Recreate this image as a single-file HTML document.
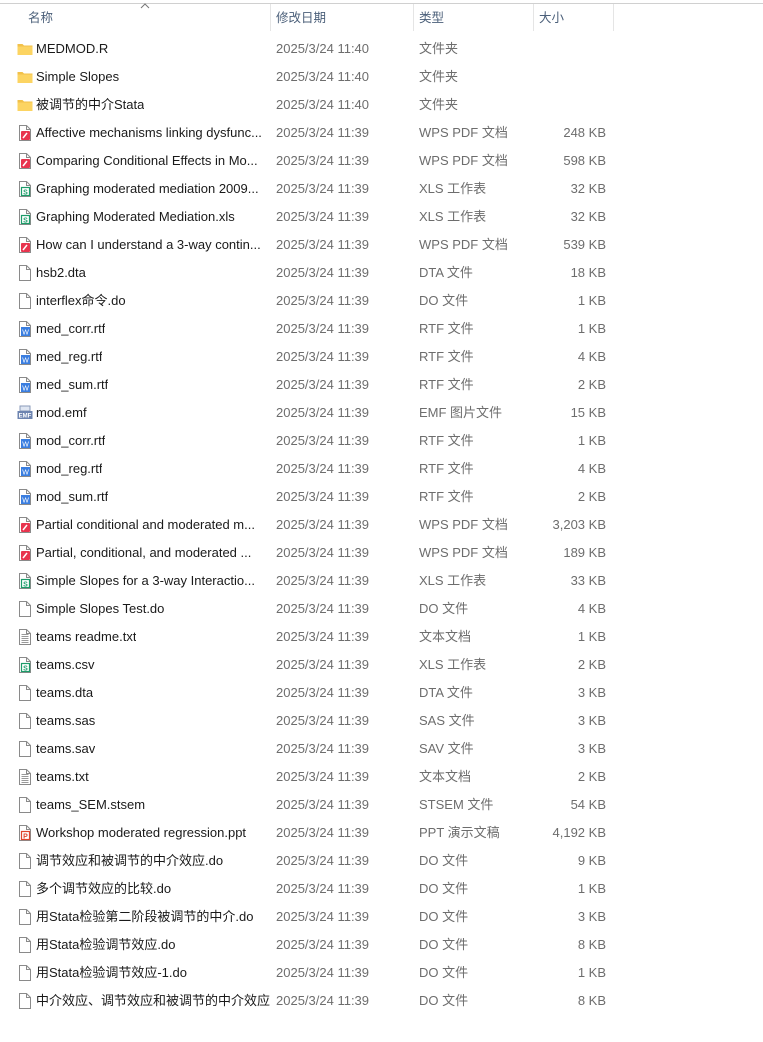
<!DOCTYPE html>
<html><head><meta charset="utf-8"><style>
body{margin:0;width:763px;height:1042px;background:#fff;font-family:"Liberation Sans","Noto Sans CJK SC",sans-serif;font-size:13px;color:#1a1a1a;position:relative;overflow:hidden}
.top{position:absolute;left:0;top:3px;width:763px;height:1px;background:#d0d0d0}
.sep{position:absolute;top:4px;height:27px;width:1px;background:#e5e5e5}
.h{position:absolute;top:10px;color:#4c607a;font-size:12.5px;line-height:16px}
.r{position:absolute;left:0;width:763px;height:20px;line-height:16px}
.r svg{position:absolute;left:17px;top:2px}
.r span{display:block;height:16px;line-height:16px}
.n{position:absolute;left:36px;top:2px;white-space:nowrap;max-width:234px;overflow:hidden;text-overflow:ellipsis}
.d{position:absolute;left:276px;top:2px;color:#6d6d6d}
.t{position:absolute;left:419px;top:2px;color:#6d6d6d}
.s{position:absolute;right:157px;top:2px;color:#6d6d6d}
</style></head><body>
<div class="top"></div>
<svg style="position:absolute;left:140px;top:3px" width="10" height="6"><path d="M1 5 L5 1 L9 5" stroke="#777" fill="none"/></svg>
<div class="sep" style="left:270px"></div><div class="sep" style="left:413px"></div><div class="sep" style="left:533px"></div><div class="sep" style="left:613px"></div>
<div class="h" style="left:28px">名称</div><div class="h" style="left:276px">修改日期</div><div class="h" style="left:419px">类型</div><div class="h" style="left:539px">大小</div>
<svg width="0" height="0" style="position:absolute"><defs>
<symbol id="folder" viewBox="0 0 16 16"><path d="M0.5 3 h5 l1.5 1.5 h8.5 v9.5 h-15z" fill="#f2c14a"/><rect x="0.5" y="5.5" width="15" height="8.5" fill="#fcd462"/></symbol>
<symbol id="file" viewBox="0 0 16 16"><path d="M2.5 0.5 h7 l4 4 v11 h-11z" fill="#fff" stroke="#8a8a8a"/><path d="M9.5 0.5 v4 h4" fill="none" stroke="#8a8a8a"/></symbol>
<symbol id="pdf" viewBox="0 0 16 16"><use href="#file"/><rect x="4" y="6" width="9" height="9" rx="1" fill="#e8344e"/><path d="M6 13 l4 -5" stroke="#fff" stroke-width="1.5"/></symbol>
<symbol id="xls" viewBox="0 0 16 16"><use href="#file"/><rect x="4.5" y="6.5" width="8" height="8" fill="#fff" stroke="#1c9c6a" stroke-width="1.2"/><text x="8.5" y="13.3" font-size="7" font-family="Liberation Sans" fill="#1c9c6a" text-anchor="middle" font-weight="bold">S</text></symbol>
<symbol id="rtf" viewBox="0 0 16 16"><use href="#file"/><rect x="4" y="6" width="9" height="9" fill="#3a7ee0"/><text x="8.5" y="13.5" font-size="7" font-family="Liberation Sans" fill="#fff" text-anchor="middle">W</text></symbol>
<symbol id="ppt" viewBox="0 0 16 16"><use href="#file"/><rect x="4.5" y="6.5" width="8" height="8" fill="#fff" stroke="#e0452c" stroke-width="1.2"/><text x="8.5" y="13.3" font-size="7" font-family="Liberation Sans" fill="#e0452c" text-anchor="middle" font-weight="bold">P</text></symbol>
<symbol id="txt" viewBox="0 0 16 16"><use href="#file"/><path d="M4.5 5.5h7M4.5 7.5h7M4.5 9.5h7M4.5 11.5h7M4.5 13.5h7" stroke="#999"/></symbol>
<symbol id="emf" viewBox="0 0 16 16"><rect x="3" y="1" width="10" height="5" fill="#dfe6f2" stroke="#8a9ab8"/><rect x="0.5" y="6" width="15" height="8" fill="#6d84b0"/><text x="8" y="12.5" font-size="6" font-family="Liberation Sans" fill="#fff" text-anchor="middle" font-weight="bold">EMF</text></symbol>
</defs></svg>
<div id="rows"></div>
<script>
var d=[
["folder","MEDMOD.R","文件夹",""],["folder","Simple Slopes","文件夹",""],["folder","被调节的中介Stata","文件夹",""],
["pdf","Affective mechanisms linking dysfunc...","WPS PDF 文档","248 KB"],["pdf","Comparing Conditional Effects in Mo...","WPS PDF 文档","598 KB"],
["xls","Graphing moderated mediation 2009...","XLS 工作表","32 KB"],["xls","Graphing Moderated Mediation.xls","XLS 工作表","32 KB"],
["pdf","How can I understand a 3-way contin...","WPS PDF 文档","539 KB"],["file","hsb2.dta","DTA 文件","18 KB"],["file","interflex命令.do","DO 文件","1 KB"],
["rtf","med_corr.rtf","RTF 文件","1 KB"],["rtf","med_reg.rtf","RTF 文件","4 KB"],["rtf","med_sum.rtf","RTF 文件","2 KB"],["emf","mod.emf","EMF 图片文件","15 KB"],
["rtf","mod_corr.rtf","RTF 文件","1 KB"],["rtf","mod_reg.rtf","RTF 文件","4 KB"],["rtf","mod_sum.rtf","RTF 文件","2 KB"],
["pdf","Partial conditional and moderated m...","WPS PDF 文档","3,203 KB"],["pdf","Partial, conditional, and moderated ...","WPS PDF 文档","189 KB"],
["xls","Simple Slopes for a 3-way Interactio...","XLS 工作表","33 KB"],["file","Simple Slopes Test.do","DO 文件","4 KB"],["txt","teams readme.txt","文本文档","1 KB"],
["xls","teams.csv","XLS 工作表","2 KB"],["file","teams.dta","DTA 文件","3 KB"],["file","teams.sas","SAS 文件","3 KB"],["file","teams.sav","SAV 文件","3 KB"],
["txt","teams.txt","文本文档","2 KB"],["file","teams_SEM.stsem","STSEM 文件","54 KB"],["ppt","Workshop moderated regression.ppt","PPT 演示文稿","4,192 KB"],
["file","调节效应和被调节的中介效应.do","DO 文件","9 KB"],["file","多个调节效应的比较.do","DO 文件","1 KB"],["file","用Stata检验第二阶段被调节的中介.do","DO 文件","3 KB"],
["file","用Stata检验调节效应.do","DO 文件","8 KB"],["file","用Stata检验调节效应-1.do","DO 文件","1 KB"],["file","中介效应、调节效应和被调节的中介效应","DO 文件","8 KB"]];
var h="";d.forEach(function(r,i){var y=39+i*28;var dt=i<3?"2025/3/24 11:40":"2025/3/24 11:39";
h+='<div class="r" style="top:'+y+'px"><svg width="16" height="16"><use href="#'+r[0]+'"/></svg><span class="n">'+r[1]+'</span><span class="d">'+dt+'</span><span class="t">'+r[2]+'</span><span class="s">'+r[3]+'</span></div>';});
document.getElementById("rows").innerHTML=h;
</script>
</body></html>
